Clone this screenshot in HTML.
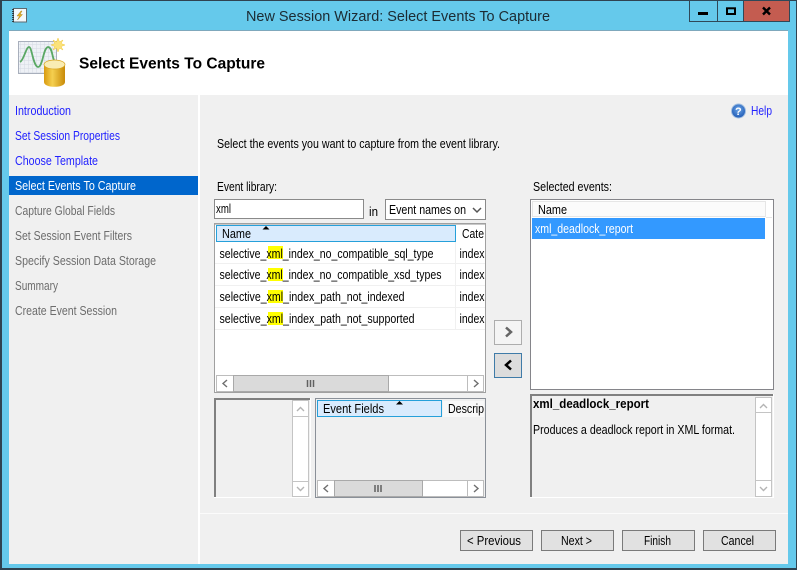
<!DOCTYPE html>
<html><head><meta charset="utf-8"><title>New Session Wizard</title>
<style>
html,body{margin:0;padding:0;background:#65c9eb;width:797px;height:570px;overflow:hidden}
svg{display:block}
text{font-family:"Liberation Sans",sans-serif;font-size:12.6px;fill:#000;white-space:pre}
.b{fill:#2222ff}.g{fill:#6d6d6d}
.ar{fill:none;stroke:#6f6f6f;stroke-width:1.4}
.ard{fill:none;stroke:#b4b4b4;stroke-width:1.4}
</style></head><body>
<svg width="797" height="570" viewBox="0 0 797 570" xmlns="http://www.w3.org/2000/svg">
<defs>
<linearGradient id="cy" x1="0" x2="1" y1="0" y2="0"><stop offset="0" stop-color="#d99a10"/><stop offset=".4" stop-color="#f5d050"/><stop offset="1" stop-color="#c88a08"/></linearGradient>
<radialGradient id="hp" cx=".5" cy=".4" r=".6"><stop offset="0" stop-color="#6fa8e8"/><stop offset="1" stop-color="#1d58b4"/></radialGradient>
<pattern id="gr" width="4" height="4" patternUnits="userSpaceOnUse"><rect width="4" height="4" fill="#eef1f6"/><path d="M0 0H4M0 0V4" stroke="#d4d9e3" stroke-width="1"/></pattern>
</defs>
<!-- frame -->
<rect width="797" height="570" fill="#65c9eb"/>
<rect width="797" height="1" fill="#2f4250"/>
<rect width="2" height="570" fill="#2f4250"/>
<rect x="796" width="1" height="570" fill="#2f4250"/>
<rect y="568" width="797" height="2" fill="#2f4250"/>
<!-- window buttons -->
<rect x="689.5" y="0.5" width="28" height="21" fill="#65c9eb" stroke="#2f4858"/>
<rect x="717.5" y="0.5" width="26" height="21" fill="#65c9eb" stroke="#2f4858"/>
<rect x="743.5" y="0.5" width="46" height="21" fill="#c45c50" stroke="#2f4858"/>
<rect x="698" y="12" width="10" height="3" fill="#000"/>
<rect x="727" y="8.300" width="8" height="5.700" fill="none" stroke="#000" stroke-width="2"/>
<path d="M763 7.5L770 14.5M770 7.5L763 14.5" stroke="#000" stroke-width="2.4" fill="none"/>
<!-- app icon -->
<rect x="13.5" y="8.5" width="13" height="13.5" fill="#f4f8fb" stroke="#5e6a70"/>
<path d="M13 9v13" stroke="#222" stroke-width="1.6" stroke-dasharray="1 1"/>
<path d="M21 11l-4 5h2.500l-2 4 5-5.500h-2.500l2-3.500z" fill="#e8b020" stroke="#a07510" stroke-width=".4"/>
<text x="246" y="21" textLength="304" lengthAdjust="spacingAndGlyphs" style="font-size:14.5px;fill:#1c2b33">New Session Wizard: Select Events To Capture</text>
<!-- header -->
<rect x="9" y="31" width="779" height="64" fill="#fff"/>
<rect x="9" y="30" width="779" height="1" fill="#7fa8bc"/>
<rect x="18.500" y="41.500" width="38" height="32" fill="url(#gr)" stroke="#a8afbc"/>
<path d="M20 62C24 60 26 47 29 47C32 47 33 66 38 67C43 67 43 48 48 47C52 47 52 56 54 60" fill="none" stroke="#5aa864" stroke-width="1.800"/>
<path d="M58 38l1.500 4 3.500-2-2 3.500 4 1.500-4 1.500 2 3.500-3.500-2-1.500 4-1.500-4-3.500 2 2-3.500-4-1.500 4-1.500-2-3.500 3.500 2z" fill="#fbe27a" stroke="#f1c93a" stroke-width=".5"/>
<path d="M44 65v17c0 3 4.500 4.800 10.500 4.800s10.500-1.800 10.500-4.800v-17z" fill="url(#cy)"/>
<ellipse cx="54.500" cy="64.500" rx="10.500" ry="4.500" fill="#f9ecb4" stroke="#d9a520" stroke-width=".7"/>
<text x="79" y="68.500" textLength="186" lengthAdjust="spacingAndGlyphs" style="font-size:15.500px;font-weight:bold">Select Events To Capture</text>
<!-- sidebar -->
<rect x="9" y="95" width="189" height="469" fill="#f0f0f0"/>
<rect x="198" y="95" width="2" height="469" fill="#fff"/>
<rect x="200" y="95" width="588" height="469" fill="#f0f0f0"/>
<rect x="9" y="176" width="189" height="19" fill="#0066cc"/>
<text class="b" x="15" y="115" textLength="56" lengthAdjust="spacingAndGlyphs">Introduction</text>
<text class="b" x="15" y="140" textLength="105" lengthAdjust="spacingAndGlyphs">Set Session Properties</text>
<text class="b" x="15" y="165" textLength="83" lengthAdjust="spacingAndGlyphs">Choose Template</text>
<text x="15" y="190" textLength="121" lengthAdjust="spacingAndGlyphs" style="fill:#fff">Select Events To Capture</text>
<text class="g" x="15" y="215" textLength="100" lengthAdjust="spacingAndGlyphs">Capture Global Fields</text>
<text class="g" x="15" y="240" textLength="117" lengthAdjust="spacingAndGlyphs">Set Session Event Filters</text>
<text class="g" x="15" y="265" textLength="141" lengthAdjust="spacingAndGlyphs">Specify Session Data Storage</text>
<text class="g" x="15" y="290" textLength="43" lengthAdjust="spacingAndGlyphs">Summary</text>
<text class="g" x="15" y="315" textLength="102" lengthAdjust="spacingAndGlyphs">Create Event Session</text>
<!-- help -->
<circle cx="738.500" cy="111" r="7" fill="url(#hp)" stroke="#9fbde0"/>
<text x="735" y="115" style="font-size:11px;font-weight:bold;fill:#fff">?</text>
<text class="b" x="751" y="115" textLength="21" lengthAdjust="spacingAndGlyphs">Help</text>
<text x="217" y="148" textLength="283" lengthAdjust="spacingAndGlyphs">Select the events you want to capture from the event library.</text>
<text x="217" y="191" textLength="60" lengthAdjust="spacingAndGlyphs">Event library:</text>
<text x="533" y="191" textLength="79" lengthAdjust="spacingAndGlyphs">Selected events:</text>
<!-- search -->
<rect x="214.500" y="199.500" width="149" height="19" fill="#fff" stroke="#8a8a8a"/>
<text x="216" y="213" textLength="15" lengthAdjust="spacingAndGlyphs">xml</text>
<text x="369" y="216" textLength="9" lengthAdjust="spacingAndGlyphs">in</text>
<rect x="385.500" y="199.500" width="100" height="20" fill="#fff" stroke="#8a8a8a"/>
<text x="389" y="214" textLength="77" lengthAdjust="spacingAndGlyphs">Event names on</text>
<path d="M473 208l4 4 4-4" fill="none" stroke="#555" stroke-width="1.500"/>
<!-- event library list -->
<rect x="214.500" y="223.500" width="271" height="169" fill="#fff" stroke="#a0a0a0"/>
<rect x="215" y="224" width="270" height="1" fill="#c8c8c8"/>
<rect x="216.500" y="225.500" width="239" height="16" fill="#d9ebfd" stroke="#26a0da"/>
<text x="222" y="238" textLength="29" lengthAdjust="spacingAndGlyphs">Name</text>
<path d="M262.500 229.500l3.500-3.500 3.500 3.500z" fill="#000"/>
<text x="462" y="238" textLength="22" lengthAdjust="spacingAndGlyphs">Cate</text>
<path d="M215 263.500H485M215 285.500H485M215 307.500H485M215 329.500H485" stroke="#f0f0f0"/>
<path d="M455.500 242V330" stroke="#f0f0f0"/>
<rect x="268" y="246" width="15" height="13" fill="#ffff00"/>
<rect x="268" y="268" width="15" height="13" fill="#ffff00"/>
<rect x="268" y="290" width="15" height="13" fill="#ffff00"/>
<rect x="268" y="312" width="15" height="13" fill="#ffff00"/>
<text x="219.500" y="258" textLength="214" lengthAdjust="spacingAndGlyphs">selective_xml_index_no_compatible_sql_type</text>
<text x="219.500" y="279" textLength="222" lengthAdjust="spacingAndGlyphs">selective_xml_index_no_compatible_xsd_types</text>
<text x="219.500" y="301" textLength="185" lengthAdjust="spacingAndGlyphs">selective_xml_index_path_not_indexed</text>
<text x="219.500" y="323" textLength="195" lengthAdjust="spacingAndGlyphs">selective_xml_index_path_not_supported</text>
<text x="459.500" y="258" textLength="25" lengthAdjust="spacingAndGlyphs">index</text>
<text x="459.500" y="279" textLength="25" lengthAdjust="spacingAndGlyphs">index</text>
<text x="459.500" y="301" textLength="25" lengthAdjust="spacingAndGlyphs">index</text>
<text x="459.500" y="323" textLength="25" lengthAdjust="spacingAndGlyphs">index</text>
<!-- hscroll 1 -->
<rect x="216.500" y="375.500" width="267" height="16" fill="#fff" stroke="#bdbdbd"/>
<rect x="233.500" y="375.500" width="155" height="16" fill="#dadada" stroke="#a9a9a9"/>
<rect x="467.500" y="375.500" width="16" height="16" fill="#fff" stroke="#bdbdbd"/>
<path class="ar" d="M227 380l-4 3.500 4 3.500"/>
<path class="ar" d="M474 380l4 3.500-4 3.500"/>
<path d="M307.500 380v7M310.500 380v7M313.500 380v7" stroke="#606060" stroke-width="1.500"/>
<!-- bottom left inset -->
<rect x="214" y="398" width="97" height="100" fill="#fff"/>
<rect x="215" y="399" width="95" height="98" fill="#f0f0f0"/>
<path d="M215 497V399H310" fill="none" stroke="#808080" stroke-width="2"/>
<rect x="292.500" y="400.500" width="16" height="96" fill="#fff" stroke="#c4c4c4"/>
<path d="M292 416.500H309M292 481.500H309" stroke="#c4c4c4"/>
<path class="ard" d="M297 411l3.500-3.500 3.500 3.500"/>
<path class="ard" d="M297 487l3.500 3.500 3.500-3.500"/>
<!-- bottom mid -->
<rect x="315.500" y="398.500" width="170" height="99" fill="#f0f0f0" stroke="#8a9098"/>
<rect x="317.500" y="400.500" width="124" height="16" fill="#d9ebfd" stroke="#26a0da"/>
<text x="323" y="413" textLength="61" lengthAdjust="spacingAndGlyphs">Event Fields</text>
<path d="M396 404.500l3.500-3.500 3.500 3.500z" fill="#000"/>
<rect x="443" y="401" width="41" height="16" fill="#f8f8f8"/>
<text x="448" y="413" textLength="36" lengthAdjust="spacingAndGlyphs">Descrip</text>
<rect x="317.500" y="480.500" width="166" height="16" fill="#fff" stroke="#bdbdbd"/>
<rect x="334.500" y="480.500" width="88" height="16" fill="#dadada" stroke="#a9a9a9"/>
<rect x="467.500" y="480.500" width="16" height="16" fill="#fff" stroke="#bdbdbd"/>
<path class="ar" d="M328 485l-4 3.500 4 3.500"/>
<path class="ar" d="M474 485l4 3.500-4 3.500"/>
<path d="M375 485v7M378 485v7M381 485v7" stroke="#606060" stroke-width="1.500"/>
<!-- arrows -->
<rect x="494.500" y="320.500" width="27" height="24" fill="#f4f4f4" stroke="#adadad"/>
<path d="M506 327.500l5 4.500-5 4.500" fill="none" stroke="#666" stroke-width="2.500"/>
<rect x="494.500" y="353.500" width="27" height="24" fill="#dcdcdc" stroke="#3f7ba8"/>
<path d="M511 360.500l-5 4.500 5 4.500" fill="none" stroke="#000" stroke-width="2.500"/>
<!-- selected list -->
<rect x="530.500" y="199.500" width="243" height="190" fill="#fff" stroke="#85858a"/>
<rect x="532.500" y="201.500" width="233" height="15" fill="#fbfbfb" stroke="#e6e6e6"/>
<path d="M766 217.500H772" stroke="#e6e6e6"/>
<text x="538" y="214" textLength="29" lengthAdjust="spacingAndGlyphs">Name</text>
<rect x="532" y="218" width="233" height="21" fill="#3399ff"/>
<text x="535" y="233" textLength="98" lengthAdjust="spacingAndGlyphs" style="fill:#fff">xml_deadlock_report</text>
<!-- description -->
<rect x="530" y="394" width="244" height="104" fill="#fff"/>
<rect x="531" y="395" width="242" height="102" fill="#f0f0f0"/>
<path d="M531 497V395H773" fill="none" stroke="#808080" stroke-width="2"/>
<rect x="755.500" y="397.500" width="16" height="99" fill="#fff" stroke="#c4c4c4"/>
<path d="M755 412.500H772M755 480.500H772" stroke="#c4c4c4"/>
<path class="ard" d="M760 408l3.500-3.500 3.500 3.500"/>
<path class="ard" d="M760 487l3.500 3.500 3.500-3.500"/>
<text x="533" y="408" textLength="116" lengthAdjust="spacingAndGlyphs" style="font-weight:bold">xml_deadlock_report</text>
<text x="533" y="434" textLength="202" lengthAdjust="spacingAndGlyphs">Produces a deadlock report in XML format.</text>
<!-- footer -->
<rect x="200" y="513" width="588" height="1" fill="#fbfbfb"/>
<rect x="460.500" y="530.500" width="72" height="20" fill="#e1e1e1" stroke="#7a7a7a"/>
<rect x="541.500" y="530.500" width="72" height="20" fill="#e1e1e1" stroke="#7a7a7a"/>
<rect x="622.500" y="530.500" width="72" height="20" fill="#e1e1e1" stroke="#7a7a7a"/>
<rect x="703.500" y="530.500" width="72" height="20" fill="#e1e1e1" stroke="#7a7a7a"/>
<text x="467" y="545" textLength="54" lengthAdjust="spacingAndGlyphs">&lt; Previous</text>
<text x="561" y="545" textLength="31" lengthAdjust="spacingAndGlyphs">Next &gt;</text>
<text x="644" y="545" textLength="27" lengthAdjust="spacingAndGlyphs">Finish</text>
<text x="721" y="545" textLength="33" lengthAdjust="spacingAndGlyphs">Cancel</text>
</svg>
</body></html>
